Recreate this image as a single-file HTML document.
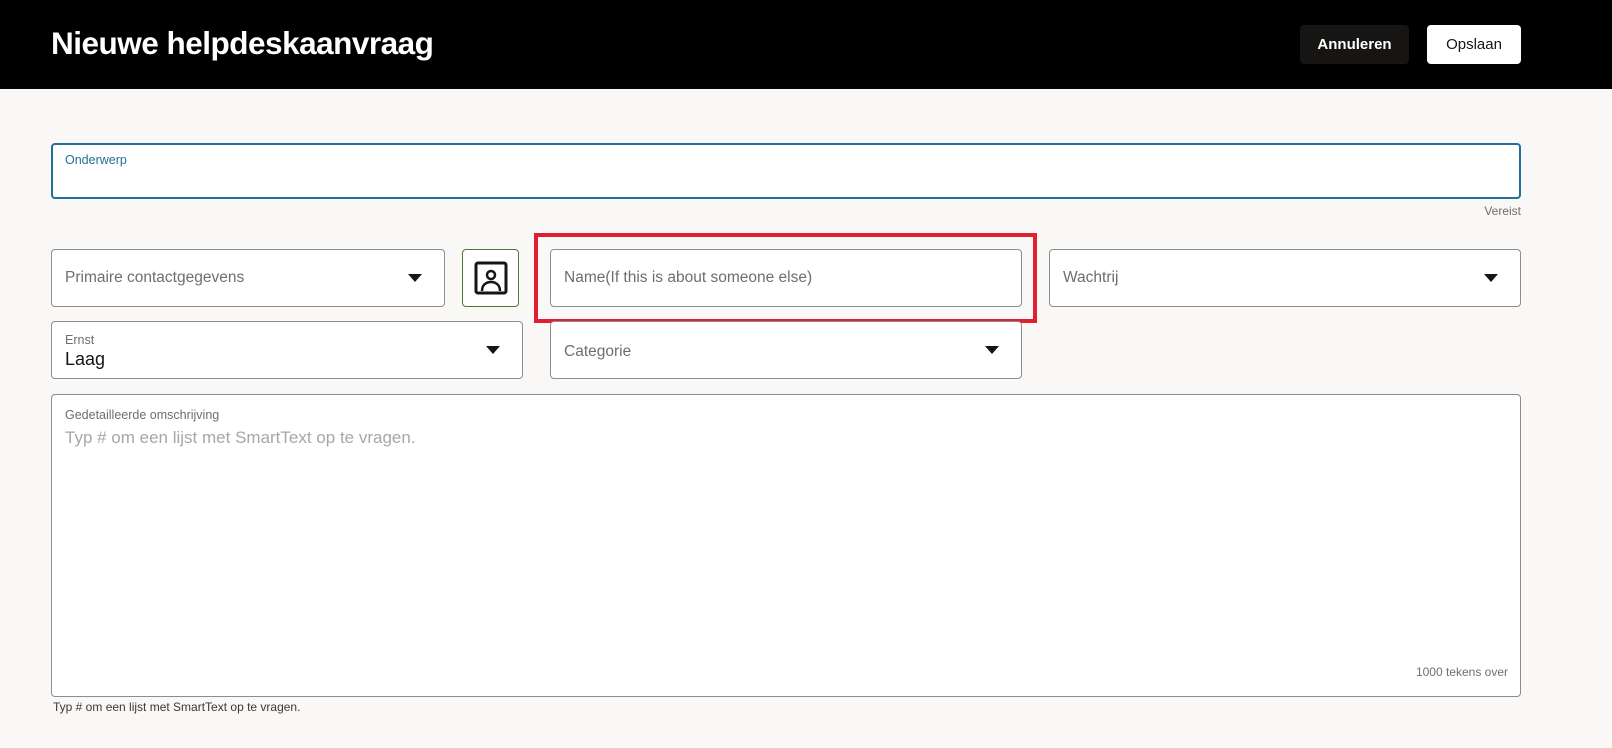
<!DOCTYPE html>
<html><head><meta charset="utf-8"><style>
*{box-sizing:border-box;margin:0;padding:0}
body{width:1612px;height:748px;background:#f9f8f6;font-family:"Liberation Sans",sans-serif;position:relative;overflow:hidden;color:#161513}
.hdr{position:absolute;left:0;top:0;width:1612px;height:89px;background:#000}
.title{position:absolute;left:51px;top:25px;color:#fff;font-weight:bold;font-size:31.5px;letter-spacing:-0.5px}
.btn{position:absolute;top:25px;height:39px;border-radius:4px;font-weight:bold;font-size:15px;display:flex;align-items:center;justify-content:center}
.box{position:absolute;background:#fff;border:1px solid #8e8d8a;border-radius:4px}
.ph{position:absolute;left:13px;font-size:15.5px;color:#6f6e6b}
.lbl{position:absolute;left:13px;top:11px;font-size:12.5px;color:#6f6e6b}
.caret{position:absolute;right:22px;top:50%;margin-top:-4px;width:0;height:0;border-left:7px solid transparent;border-right:7px solid transparent;border-top:8px solid #161513}
</style></head><body>
<div class="hdr">
<div class="title">Nieuwe helpdeskaanvraag</div>
<div class="btn" style="left:1300px;width:109px;background:#161513;color:#fff">Annuleren</div>
<div class="btn" style="left:1427px;width:94px;background:#fff;color:#161513;font-weight:normal">Opslaan</div>
</div>

<div class="box" style="left:51px;top:143px;width:1470px;height:56px;border:2px solid #227099">
<div class="lbl" style="top:8px;color:#227099;left:12px">Onderwerp</div></div>
<div style="position:absolute;right:91px;top:204px;font-size:12px;color:#6f6e6b">Vereist</div>

<div class="box" style="left:51px;top:249px;width:394px;height:58px"><div class="ph" style="top:19px">Primaire contactgegevens</div><div class="caret"></div></div>
<div class="box" style="left:462px;top:249px;width:57px;height:58px;border-color:#4c7a2c">
<svg width="36" height="36" viewBox="0 0 36 36" style="position:absolute;left:10px;top:10px"><rect x="3" y="3" width="30" height="30" rx="2" fill="none" stroke="#161513" stroke-width="3"/><circle cx="18" cy="15" r="4" fill="none" stroke="#161513" stroke-width="2.5"/><path d="M9 31c0-6 4-9 9-9s9 3 9 9" fill="none" stroke="#161513" stroke-width="2.5"/></svg></div>
<div style="position:absolute;left:534px;top:233px;width:503px;height:90px;border:4px solid #e0202e"></div>
<div class="box" style="left:550px;top:249px;width:472px;height:58px"><div class="ph" style="top:19px">Name(If this is about someone else)</div></div>
<div class="box" style="left:1049px;top:249px;width:472px;height:58px"><div class="ph" style="top:19px">Wachtrij</div><div class="caret"></div></div>

<div class="box" style="left:51px;top:321px;width:472px;height:58px"><div class="lbl" style="top:11px">Ernst</div><div style="position:absolute;left:13px;top:27px;font-size:18px">Laag</div><div class="caret"></div></div>
<div class="box" style="left:550px;top:321px;width:472px;height:58px"><div class="ph" style="top:21px">Categorie</div><div class="caret"></div></div>

<div class="box" style="left:51px;top:394px;width:1470px;height:303px">
<div class="lbl" style="top:13px">Gedetailleerde omschrijving</div>
<div style="position:absolute;left:13px;top:33px;font-size:17px;color:#a8a7a4">Typ # om een lijst met SmartText op te vragen.</div>
<div style="position:absolute;right:12px;bottom:17px;font-size:12px;color:#6f6e6b">1000 tekens over</div>
</div>
<div style="position:absolute;left:53px;top:700px;font-size:12px;color:#3a3936">Typ # om een lijst met SmartText op te vragen.</div>
</body></html>
